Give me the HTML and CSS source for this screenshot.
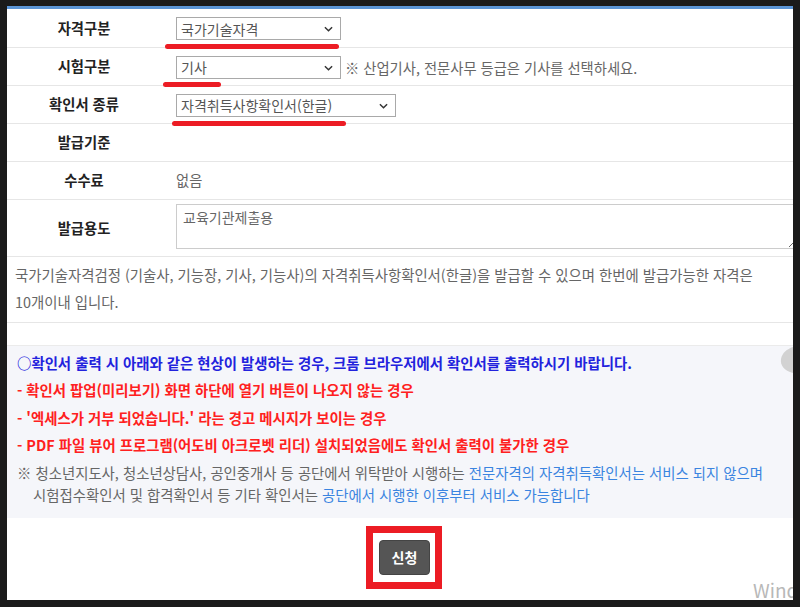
FILE: index.html
```html
<!DOCTYPE html>
<html lang="ko">
<head>
    <meta charset="UTF-8">
    <meta name="viewport" content="width=device-width, initial-scale=1.0">
    <title>확인서 발급 신청</title>
    <link rel="stylesheet" href="styles.css">
</head>
<body>
    <div class="page">
        <table class="form-table">
            <tr class="first">
                <th>자격구분</th>
                <td>
                    <span class="select-wrap">
                        <select class="select"><option>국가기술자격</option></select>
                        <svg class="chevron" viewBox="0 0 10 6"><path d="M1 1 L5 5 L9 1" /></svg>
                    </span>
                    <span class="mark mark-type"></span>
                </td>
            </tr>
            <tr>
                <th>시험구분</th>
                <td>
                    <span class="select-wrap">
                        <select class="select"><option>기사</option></select>
                        <svg class="chevron" viewBox="0 0 10 6"><path d="M1 1 L5 5 L9 1" /></svg>
                    </span>
                    <span class="note">※ 산업기사, 전문사무 등급은 기사를 선택하세요.</span>
                    <span class="mark mark-exam"></span>
                </td>
            </tr>
            <tr>
                <th>확인서 종류</th>
                <td>
                    <span class="select-wrap">
                        <select class="select wide"><option>자격취득사항확인서(한글)</option></select>
                        <svg class="chevron" viewBox="0 0 10 6"><path d="M1 1 L5 5 L9 1" /></svg>
                    </span>
                    <span class="mark mark-doc"></span>
                </td>
            </tr>
            <tr>
                <th>발급기준</th>
                <td></td>
            </tr>
            <tr>
                <th>수수료</th>
                <td class="value">없음</td>
            </tr>
            <tr class="tall">
                <th>발급용도</th>
                <td><textarea class="purpose">교육기관제출용</textarea></td>
            </tr>
        </table>

        <p class="desc">국가기술자격검정 (기술사, 기능장, 기사, 기능사)의 자격취득사항확인서(한글)을 발급할 수 있으며 한번에 발급가능한 자격은 10개이내 입니다.</p>

        <div class="spacer"></div>

        <div class="notice">
            <svg class="curl" viewBox="0 0 14 26"><path d="M14 0 C8 2 3 6 2 12 C1 18 5 24 14 26 Z" /></svg>
            <p class="notice-title">○확인서 출력 시 아래와 같은 현상이 발생하는 경우, 크롬 브라우저에서 확인서를 출력하시기 바랍니다.</p>
            <p class="notice-item">- 확인서 팝업(미리보기) 화면 하단에 열기 버튼이 나오지 않는 경우</p>
            <p class="notice-item">- '엑세스가 거부 되었습니다.' 라는 경고 메시지가 보이는 경우</p>
            <p class="notice-item">- PDF 파일 뷰어 프로그램(어도비 아크로벳 리더) 설치되었음에도 확인서 출력이 불가한 경우</p>
            <p class="notice-sub">※ 청소년지도사, 청소년상담사, 공인중개사 등 공단에서 위탁받아 시행하는 <span class="link">전문자격의 자격취득확인서는 서비스 되지 않으며</span><br>시험접수확인서 및 합격확인서 등 기타 확인서는 <span class="link">공단에서 시행한 이후부터 서비스 가능합니다</span></p>
        </div>

        <div class="actions">
            <span class="highlight"><button class="btn">신청</button></span>
        </div>

        <div class="watermark">Wind</div>
    </div>
</body>
</html>
```

FILE: styles.css
```css
* {
    margin: 0;
    padding: 0;
    box-sizing: border-box;
    font-family: "Noto Sans CJK KR", "Noto Sans", sans-serif;
}
body {
    background: #1b1b1b;
}
.page {
    position: relative;
    margin: 6px 7px 0 7px;
    height: 594px;
    border-top: 3px solid #5b95d6;
    background: #fff;
    overflow: hidden;
}
.form-table {
    width: 786px;
    border-collapse: collapse;
    table-layout: fixed;
}
.form-table th {
    width: 154px;
    height: 38px;
    padding-bottom: 2px;
    font-size: 14.3px;
    font-weight: bold;
    color: #222;
    text-align: center;
    border-bottom: 1px solid #e6e6e6;
}
.form-table .first th {
    height: 38.5px;
}
.form-table td {
    position: relative;
    padding-left: 15px;
    font-size: 14.3px;
    color: #666;
    border-bottom: 1px solid #e6e6e6;
    white-space: nowrap;
}
.form-table .tall th {
    height: 57px;
}
.form-table .tall td {
    vertical-align: top;
    padding-top: 4px;
}
.select-wrap {
    position: relative;
    display: inline-block;
    vertical-align: middle;
}
.select {
    appearance: none;
    -webkit-appearance: none;
    display: block;
    width: 165px;
    height: 23px;
    padding: 0 20px 0 4px;
    border: 1px solid #a9a9a9;
    border-radius: 0;
    background: #fff;
    font-size: 14px;
    color: #555;
    outline: none;
}
.select.wide {
    width: 220px;
}
.chevron {
    position: absolute;
    right: 8px;
    top: 9px;
    width: 9px;
    height: 6px;
    fill: none;
    stroke: #333;
    stroke-width: 1.6;
}
.note {
    vertical-align: middle;
    color: #666;
}
.value {
    padding-bottom: 2px;
    color: #777;
}
.mark {
    position: absolute;
    height: 5px;
    border-radius: 3px;
    background: #ec1c24;
}
.mark-type {
    left: 4px;
    top: 35px;
    width: 174px;
}
.mark-exam {
    left: 2px;
    top: 34px;
    width: 58px;
}
.mark-doc {
    left: 11px;
    top: 35px;
    width: 174px;
}
.purpose {
    display: block;
    width: 622px;
    height: 45px;
    padding: 2px 6px;
    border: 1px solid #ccc;
    font-size: 14px;
    color: #666;
    resize: both;
}
.desc {
    padding: 4px 8px 7px 8px;
    font-size: 14.4px;
    line-height: 27px;
    color: #666;
    word-break: keep-all;
    border-bottom: 1px solid #e6e6e6;
}
.spacer {
    height: 22px;
}
.notice {
    position: relative;
    padding: 3px 10px 12px 10px;
    background: #f5f6fa;
    border-top: 1px solid #ebebeb;
    font-size: 14.4px;
}
.curl {
    position: absolute;
    right: 0;
    top: 1px;
    width: 14px;
    height: 26px;
    fill: #d2d2d2;
}
.notice-title {
    line-height: 27px;
    font-weight: bold;
    color: #2222dd;
}
.notice-item {
    line-height: 27.5px;
    font-weight: bold;
    color: #ff2020;
}
.notice-sub {
    margin-top: 3px;
    padding-left: 16px;
    text-indent: -16px;
    line-height: 22px;
    color: #666;
}
.link {
    color: #3a84e0;
}
.actions {
    padding: 8px 0 0 8px;
    text-align: center;
}
.highlight {
    display: inline-block;
    padding: 7px 5px 7px 6px;
    border: 7px solid #ec1c24;
}
.btn {
    display: block;
    width: 51px;
    height: 35px;
    border: 1px solid #444;
    border-radius: 4px;
    background: #555;
    color: #fff;
    font-size: 14px;
    font-weight: bold;
}
.watermark {
    position: absolute;
    left: 746px;
    top: 570px;
    font-size: 19px;
    line-height: 22px;
    color: #b8b8b8;
    white-space: nowrap;
}
```
